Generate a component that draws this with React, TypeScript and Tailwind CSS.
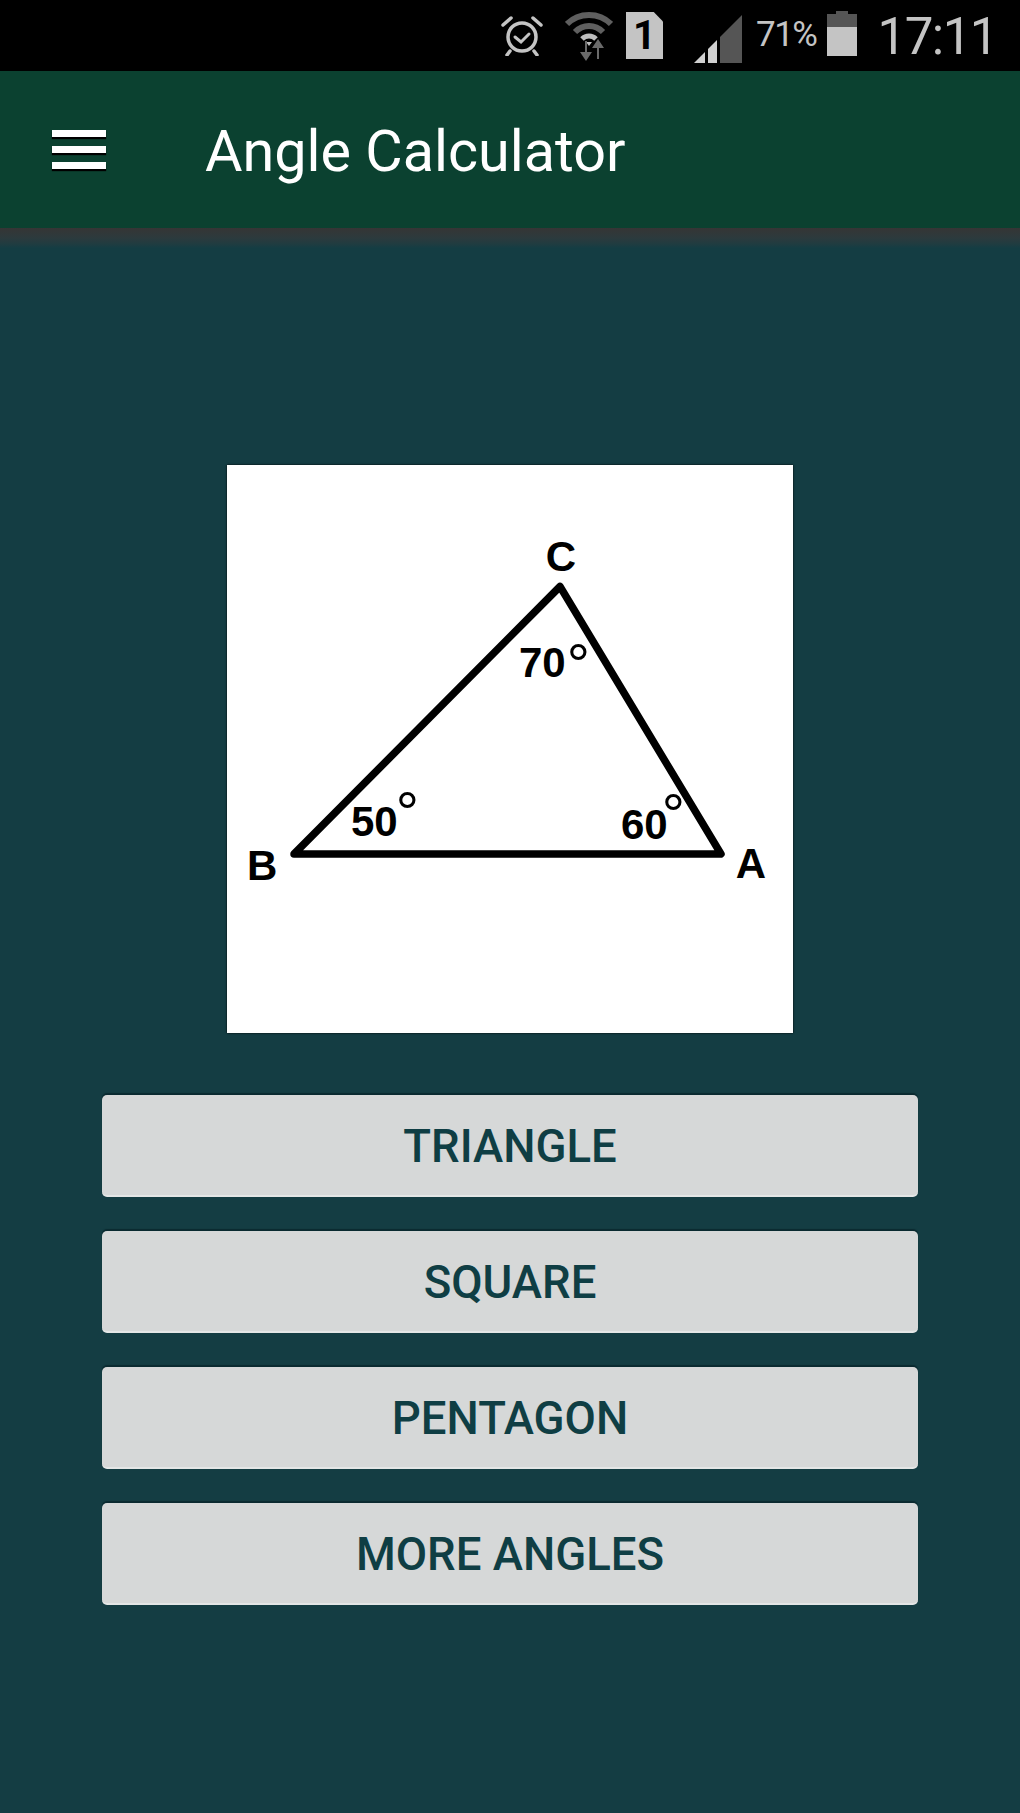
import React from "react";

const AlarmIcon = () => (
  <svg width="42" height="40" viewBox="0 0 42 40" fill="none" stroke="#c4c4c4" strokeWidth="3.5" strokeLinecap="round">
    <circle cx="21" cy="21" r="14" />
    <path d="M14 21l6 5 8-8" strokeWidth="3" />
    <path d="M2 9l8-7M40 9l-8-7M9 35l-3 4M33 35l3 4" />
  </svg>
);

const WifiIcon = () => (
  <svg width="48" height="50" viewBox="0 0 48 50" fill="none">
    <path d="M2 13C14 1 34 1 46 13" stroke="#5f5f5f" strokeWidth="6" />
    <path d="M10 21C18 13 30 13 38 21" stroke="#5f5f5f" strokeWidth="6" />
    <path d="M17 28C21 24 27 24 31 28" stroke="#bdbdbd" strokeWidth="5" />
    <path d="M21 31h6l-3 4z" fill="#bdbdbd" />
    <path d="M20 30v11h-5l6 9 6-9h-5V30z" fill="#6a6a6a" />
    <path d="M34 48V37h5l-6-9-6 9h5v11z" fill="#6a6a6a" />
  </svg>
);

const SimIcon = () => (
  <div className="w-[37px] h-[47px] bg-[#c4c4c4] [clip-path:polygon(0_0,75%_0,100%_20%,100%_100%,0_100%)] flex items-center justify-center">
    <span className="text-black text-[40px] leading-none font-bold font-['Roboto',sans-serif]">1</span>
  </div>
);

const SignalIcon = () => (
  <svg width="48" height="48" viewBox="0 0 48 48">
    <path d="M0 48L11 37V48z" fill="#d0d0d0" />
    <path d="M14 34L23 25V48H14z" fill="#d0d0d0" />
    <path d="M26 22L48 0V48H26z" fill="#555555" />
  </svg>
);

const BatteryIcon = () => (
  <svg width="30" height="45" viewBox="0 0 30 45">
    <path d="M9 0h12v3h9v13H0V3h9z" fill="#555555" />
    <rect x="0" y="16" width="30" height="29" fill="#c4c4c4" />
  </svg>
);

const Triangle = () => (
  <svg width="566" height="568" viewBox="0 0 566 568" className="font-['Liberation_Sans',Arial,sans-serif] font-bold">
    <path d="M67 389L333 121.5L494 389Z" fill="none" stroke="#000" strokeWidth="7.5" strokeLinejoin="round" />
    <text x="334" y="106" fontSize="42" textAnchor="middle">C</text>
    <text x="20" y="415" fontSize="42">B</text>
    <text x="524" y="413" fontSize="42" textAnchor="middle">A</text>
    <text x="292" y="212" fontSize="42">
      70<tspan dx="1" dy="7" fontSize="58" fontWeight="400">°</tspan>
    </text>
    <text x="124" y="371" fontSize="42">
      50<tspan dx="-2" dy="-4" fontSize="58" fontWeight="400">°</tspan>
    </text>
    <text x="394" y="374" fontSize="42">
      60<tspan dx="-6" dy="-5" fontSize="58" fontWeight="400">°</tspan>
    </text>
  </svg>
);

const buttons = ["TRIANGLE", "SQUARE", "PENTAGON", "MORE ANGLES"];

export default function App() {
  return (
    <div className="w-[1020px] h-[1813px] bg-[#143d43] flex flex-col font-['Roboto',sans-serif] overflow-hidden">
      {/* status bar */}
      <div className="h-[71px] bg-black flex items-center justify-end pr-[23px] text-[#c4c4c4]">
        <AlarmIcon />
        <div className="ml-[22px]"><WifiIcon /></div>
        <div className="ml-[13px]"><SimIcon /></div>
        <div className="ml-[31px] mt-[6px]"><SignalIcon /></div>
        <span className="ml-[14px] text-[35px] tracking-[-1.5px] font-normal">71%</span>
        <div className="ml-[11px] -mt-[4px]"><BatteryIcon /></div>
        <span className="ml-[20px] mt-[2px] text-[51px] leading-none font-normal tracking-[-1.5px]">17:11</span>
      </div>

      {/* toolbar */}
      <div className="h-[157px] bg-[#0b4130] flex items-center">
        <div className="ml-[52px] w-[54px] flex flex-col gap-[9px]">
          <div className="h-[7px] bg-white shadow-[0_2px_1px_#000]" />
          <div className="h-[7px] bg-white shadow-[0_2px_1px_#000]" />
          <div className="h-[7px] bg-white shadow-[0_2px_1px_#000]" />
        </div>
        <h1 className="ml-[99px] mt-[4px] text-[57.5px] leading-none text-white font-normal">Angle Calculator</h1>
      </div>
      <div className="h-[20px] bg-gradient-to-b from-[#353535] via-[#2c3a3d] to-[#143d43]" />

      <div className="flex flex-col items-center pt-[217px]">
        <div className="w-[566px] h-[568px] bg-white shadow-[0_0_2px_#000]">
          <Triangle />
        </div>
        <div className="mt-[62px] w-[816px] flex flex-col gap-[34px]">
          {buttons.map((label) => (
            <button
              key={label}
              className="h-[102px] rounded-[5px] bg-[#d6d8d8] border-b-2 border-[#e4e6e6] text-[#0f3e44] text-[45.5px] font-medium flex items-center justify-center pt-[5px] shadow-[0_-2px_1px_#0a2a30]"
            >
              {label}
            </button>
          ))}
        </div>
      </div>
    </div>
  );
}
